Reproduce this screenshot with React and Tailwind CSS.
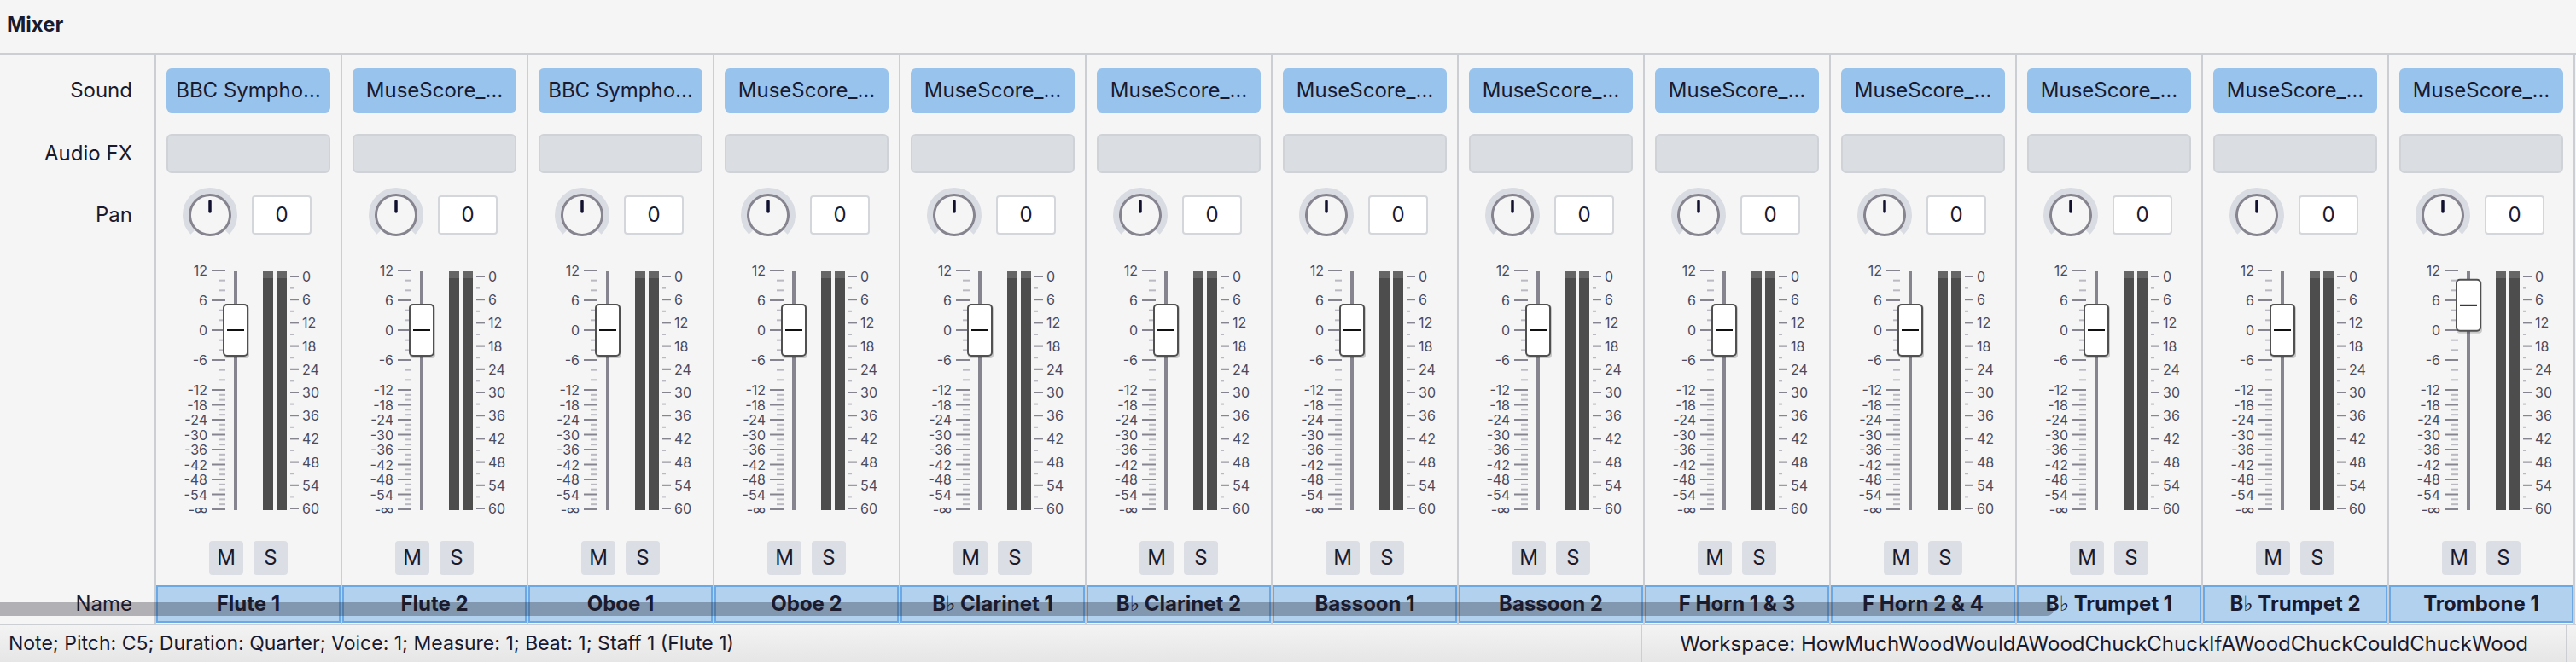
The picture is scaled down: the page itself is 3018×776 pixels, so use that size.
const channels = [
  { name: 'Flute 1', sound: 'BBC Sympho…', db: 0 },
  { name: 'Flute 2', sound: 'MuseScore_…', db: 0 },
  { name: 'Oboe 1', sound: 'BBC Sympho…', db: 0 },
  { name: 'Oboe 2', sound: 'MuseScore_…', db: 0 },
  { name: 'B♭ Clarinet 1', sound: 'MuseScore_…', db: 0 },
  { name: 'B♭ Clarinet 2', sound: 'MuseScore_…', db: 0 },
  { name: 'Bassoon 1', sound: 'MuseScore_…', db: 0 },
  { name: 'Bassoon 2', sound: 'MuseScore_…', db: 0 },
  { name: 'F Horn 1 & 3', sound: 'MuseScore_…', db: 0 },
  { name: 'F Horn 2 & 4', sound: 'MuseScore_…', db: 0 },
  { name: 'B♭ Trumpet 1', sound: 'MuseScore_…', db: 0 },
  { name: 'B♭ Trumpet 2', sound: 'MuseScore_…', db: 0 },
  { name: 'Trombone 1', sound: 'MuseScore_…', db: 5 },
];

const font = { fontFamily: 'Inter, "DejaVu Sans", sans-serif' };

// left (volume) scale: linear down to -12, compressed below
const ly = (d) => (d >= -12 ? 87 - (d * 35) / 6 : 157 + ((-12 - d) * 17.5) / 6);
// right (meter) scale
const ry = (v) => 24 + (v * 272) / 60;

const leftMajors = [12, 6, 0, -6, -12, -18, -24, -30, -36, -42, -48, -54, -60];
const leftMinors = [];
for (let d = 12; d > -60; d -= 2) if (d % 6 !== 0) leftMinors.push(d);
const rightMajors = [0, 6, 12, 18, 24, 30, 36, 42, 48, 54, 60];
const rightMinors = [3, 9, 15, 21, 27, 33, 39, 45, 51, 57];

function Knob() {
  return (
    <svg width="64" height="64" viewBox="0 0 64 64" className="block shrink-0">
      <path d="M11.85 52.15 A28.5 28.5 0 1 1 52.15 52.15" fill="none" stroke="#d9dce2" strokeWidth="7" />
      <circle cx="32" cy="32" r="23.5" fill="#f5f5f5" stroke="#85848f" strokeWidth="3" />
      <line x1="32" y1="16" x2="32" y2="28" stroke="#121230" strokeWidth="3.5" strokeLinecap="round" />
    </svg>
  );
}

function Fader({ db }) {
  const hy = ly(db);
  return (
    <svg width="216" height="310" viewBox="0 0 216 310" className="block" style={font}>
      {leftMinors.map((d) => (
        <rect key={'lm' + d} x="73" y={ly(d) - 1} width="8" height="2" fill="#b9b9c2" />
      ))}
      {leftMajors.map((d) => (
        <g key={'lM' + d}>
          <rect x="65" y={ly(d) - 1} width="16" height="2" fill="#85848f" />
          <text x="60" y={ly(d)} textAnchor="end" dominantBaseline="central" fontSize="16" fill="#4a4b5e">
            {d === -60 ? '-∞' : d}
          </text>
        </g>
      ))}
      <rect x="91" y="18" width="4" height="280" fill="#85848f" />
      <rect x="125" y="18" width="12" height="280" fill="#4d4d4d" />
      <rect x="125" y="18" width="12" height="8" fill="#666666" />
      <rect x="141" y="18" width="12" height="280" fill="#4d4d4d" />
      <rect x="141" y="18" width="12" height="8" fill="#666666" />
      {rightMinors.map((v) => (
        <rect key={'rm' + v} x="157" y={ry(v) - 1} width="4" height="2" fill="#b9b9c2" />
      ))}
      {rightMajors.map((v) => (
        <g key={'rM' + v}>
          <rect x="157" y={ry(v) - 1} width="10" height="2" fill="#85848f" />
          <text x="171" y={ry(v)} dominantBaseline="central" fontSize="16" fill="#4a4b5e">
            {v}
          </text>
        </g>
      ))}
      <rect x="79" y={hy - 29} width="30" height="62" rx="4" fill="rgba(0,0,0,0.18)" />
      <rect x="79" y={hy - 30} width="28" height="60" rx="4" fill="#ffffff" stroke="#505050" strokeWidth="2" />
      <rect x="83" y={hy - 1} width="20" height="2" fill="#111111" />
    </svg>
  );
}

function Channel({ ch }) {
  return (
    <div className="w-[218px] shrink-0 border-r-2 border-[#cbced3] flex flex-col">
      <div className="pt-[16px] flex justify-center">
        <div className="w-[192px] h-[52px] rounded-[6px] bg-[#97c3ec] flex items-center justify-center text-[24px] text-[#1a1a2f]">
          {ch.sound}
        </div>
      </div>
      <div className="mt-[25px] flex justify-center">
        <div className="w-[192px] h-[46px] rounded-[6px] bg-[#dadde2] border-2 border-[#cfd2d7]" />
      </div>
      <div className="mt-[26px] h-[46px] flex items-center pl-[31px] gap-[17px]">
        <Knob />
        <div className="w-[70px] h-[46px] bg-white border-2 border-[#d3d6da] rounded-[4px] flex items-center justify-center text-[24px] text-[#1a1a2f]">
          0
        </div>
      </div>
      <div className="mt-[25px]">
        <Fader db={ch.db} />
      </div>
      <div className="mt-[24px] flex justify-center gap-[12px]">
        <div className="w-[40px] h-[40px] rounded-[4px] bg-[#dbdee4] flex items-center justify-center text-[24px] text-[#1a1a2f]">M</div>
        <div className="w-[40px] h-[40px] rounded-[4px] bg-[#dbdee4] flex items-center justify-center text-[24px] text-[#1a1a2f]">S</div>
      </div>
      <div className="mt-[12px] h-[44px] bg-[#b1d1ef] border-2 border-[#6aa9e5] flex items-center justify-center text-[24px] font-bold text-[#1a1a2f] whitespace-nowrap">
        {ch.name}
      </div>
    </div>
  );
}

export default function App() {
  return (
    <div className="w-[3018px] h-[776px] bg-[#f5f5f5] flex flex-col overflow-hidden text-[#1a1a2f]" style={font}>
      <div className="h-[64px] shrink-0 border-b-2 border-[#cbced3] flex items-center pl-[8px] pb-[5px]">
        <span className="text-[24px] font-bold">Mixer</span>
      </div>
      <div className="relative h-[667px] shrink-0 flex">
        <div className="w-[183px] shrink-0 border-r-2 border-[#cbced3] flex flex-col items-end pr-[26px] text-[24px]">
          <div className="mt-[16px] h-[52px] flex items-center">Sound</div>
          <div className="mt-[25px] h-[46px] flex items-center">Audio FX</div>
          <div className="mt-[26px] h-[46px] flex items-center">Pan</div>
          <div className="mt-[411px] h-[44px] flex items-center">Name</div>
        </div>
        {channels.map((ch) => (
          <Channel key={ch.name} ch={ch} />
        ))}
        <div className="absolute left-0 top-[642px] w-[2406px] h-[16px] rounded-r-[8px] bg-[rgba(30,30,48,0.32)]" />
      </div>
      <div className="flex-1 border-t-2 border-[#cbced3] bg-gradient-to-b from-[#f3f3f3] to-[#e6e6e6] flex text-[23px]">
        <div className="w-[1924px] shrink-0 flex items-center pl-[10px] border-r-2 border-[#cbced3]">
          Note; Pitch: C5; Duration: Quarter; Voice: 1; Measure: 1; Beat: 1; Staff 1 (Flute 1)
        </div>
        <div className="flex-1 flex items-center justify-center border-r-2 border-[#cbced3] text-[24px]">
          Workspace: HowMuchWoodWouldAWoodChuckChuckIfAWoodChuckCouldChuckWood
        </div>
        <div className="w-[10px] shrink-0" />
      </div>
    </div>
  );
}
